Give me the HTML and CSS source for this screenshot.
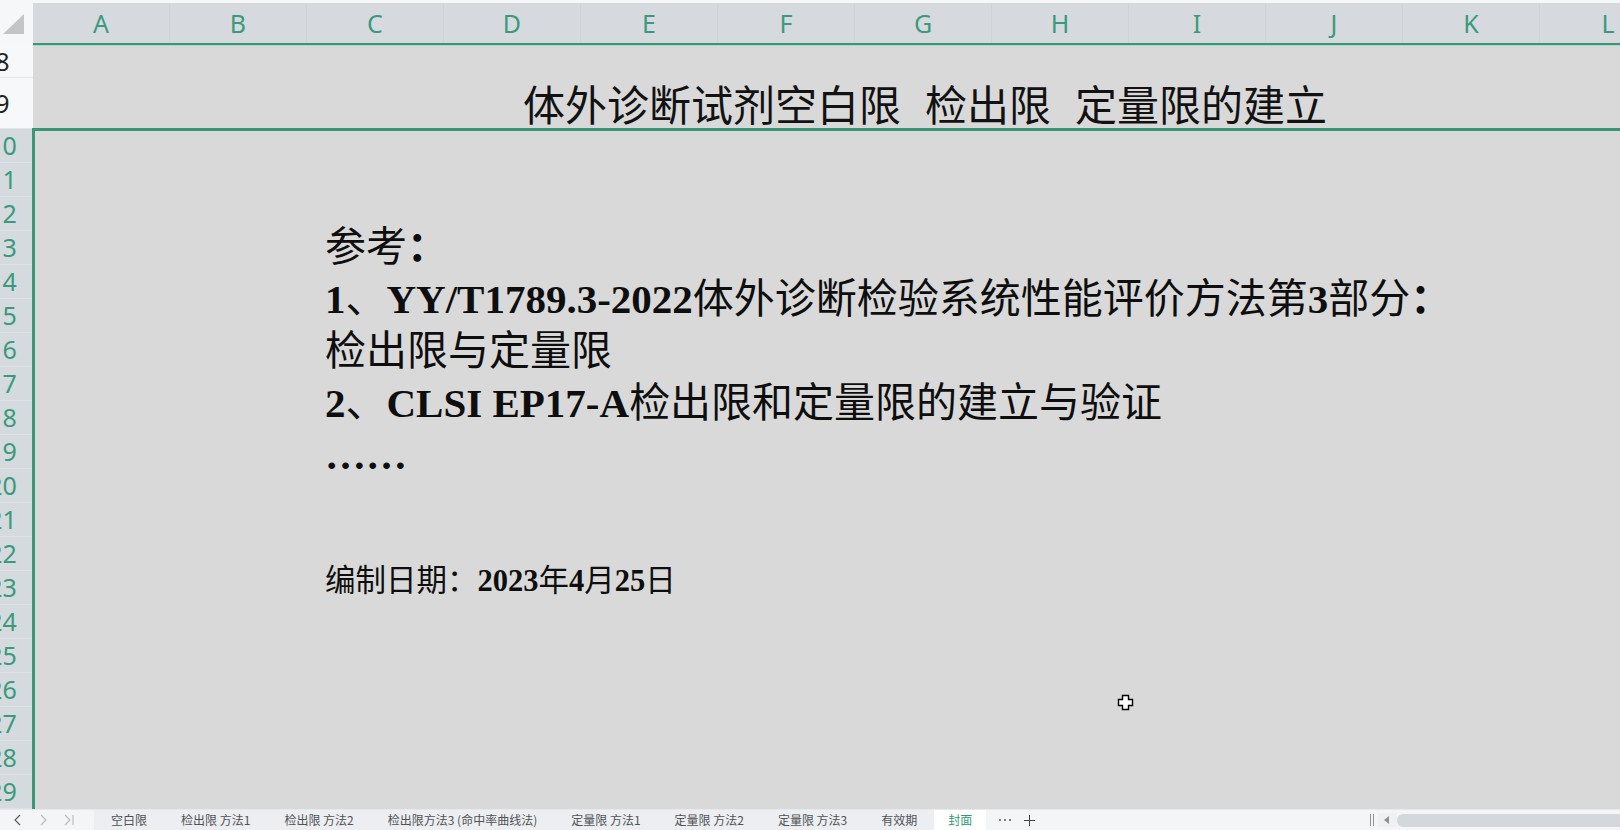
FILE: index.html
```html
<!DOCTYPE html>
<html lang="zh-CN">
<head>
<meta charset="utf-8">
<title>封面</title>
<link rel="stylesheet" href="styles.css">
</head>
<body>
<div class="app">
  <div class="topstrip"></div>
  <div class="colhead">
    <div class="corner">
      <svg width="33" height="42" viewBox="0 0 33 42"><polygon points="3,31 24,31 24,11" fill="#c4c5c7"/></svg>
    </div>
    <div class="cols">
      <div class="col">A</div><div class="col">B</div><div class="col">C</div><div class="col">D</div>
      <div class="col">E</div><div class="col">F</div><div class="col">G</div><div class="col">H</div>
      <div class="col">I</div><div class="col">J</div><div class="col">K</div><div class="col">L</div>
    </div>
  </div>
  <div class="sheet">
    <div class="rowhead">
      <div class="rh r8">8</div>
      <div class="rh r9">9</div>
      <div class="rh sel">10</div><div class="rh sel">11</div><div class="rh sel">12</div><div class="rh sel">13</div>
      <div class="rh sel">14</div><div class="rh sel">15</div><div class="rh sel">16</div><div class="rh sel">17</div>
      <div class="rh sel">18</div><div class="rh sel">19</div><div class="rh sel">20</div><div class="rh sel">21</div>
      <div class="rh sel">22</div><div class="rh sel">23</div><div class="rh sel">24</div><div class="rh sel">25</div>
      <div class="rh sel">26</div><div class="rh sel">27</div><div class="rh sel">28</div><div class="rh sel">29</div>
    </div>
    <div class="cells">
      <div class="titlerow">
        <h1 class="title">体外诊断试剂空白限  检出限  定量限的建立</h1>
      </div>
      <div class="content">
        <p class="line">参考<span class="lat">：</span></p>
        <p class="line"><span class="lat">1</span>、<span class="lat">YY/T1789.3-2022</span>体外诊断检验系统性能评价方法第<span class="lat">3</span>部分<span class="lat">：</span></p>
        <p class="line">检出限与定量限</p>
        <p class="line"><span class="lat">2</span>、<span class="lat">CLSI EP17-A</span>检出限和定量限的建立与验证</p>
        <p class="line"><span class="lat">……</span></p>
        <p class="date">编制日期：<span class="lat">2023</span>年<span class="lat">4</span>月<span class="lat">25</span>日</p>
      </div>
    </div>
  </div>
  <div class="tabbar">
    <div class="nav">
      <svg class="nv n1" width="10" height="14" viewBox="0 0 10 14"><polyline points="7,2 2,7 7,12" fill="none" stroke="#555" stroke-width="1.1"/></svg>
      <svg class="nv n2" width="10" height="14" viewBox="0 0 10 14"><polyline points="3,2 8,7 3,12" fill="none" stroke="#b5b8bc" stroke-width="1.1"/></svg>
      <svg class="nv n3" width="12" height="14" viewBox="0 0 12 14"><polyline points="2,2 7,7 2,12" fill="none" stroke="#b5b8bc" stroke-width="1.1"/><line x1="10" y1="2" x2="10" y2="12" stroke="#b5b8bc" stroke-width="1.1"/></svg>
    </div>
    <div class="tabs">
      <div class="tab">空白限</div>
      <div class="tab">检出限 方法1</div>
      <div class="tab">检出限 方法2</div>
      <div class="tab">检出限方法3 (命中率曲线法)</div>
      <div class="tab">定量限 方法1</div>
      <div class="tab">定量限 方法2</div>
      <div class="tab">定量限 方法3</div>
      <div class="tab">有效期</div>
    </div>
    <div class="tab active">封面</div>
    <div class="more"><svg width="14" height="4" viewBox="0 0 14 4"><circle cx="2" cy="2" r="1" fill="#555"/><circle cx="7" cy="2" r="1" fill="#555"/><circle cx="12" cy="2" r="1" fill="#555"/></svg></div>
    <div class="plus"><svg width="11" height="11" viewBox="0 0 11 11"><line x1="5.5" y1="0" x2="5.5" y2="11" stroke="#444" stroke-width="1"/><line x1="0" y1="5.5" x2="11" y2="5.5" stroke="#444" stroke-width="1"/></svg></div>
    <div class="spacer"></div>
    <div class="split"><span></span><span></span></div>
    <div class="hscroll">
      <div class="sarrow"><svg width="6" height="8" viewBox="0 0 6 8"><polygon points="5,0 5,8 0,4" fill="#8d9196"/></svg></div>
      <div class="thumb"></div>
    </div>
  </div>
  <div class="selection"></div>
  <svg class="cursor" width="17" height="17" viewBox="0 0 17 17"><polygon points="5.5,1.5 11.5,1.5 11.5,5.5 15.5,5.5 15.5,11.5 11.5,11.5 11.5,15.5 5.5,15.5 5.5,11.5 1.5,11.5 1.5,5.5 5.5,5.5" fill="#fff" stroke="#000" stroke-width="1.4"/></svg>
</div>
</body>
</html>
```
FILE: styles.css
```css
html, body {
  margin: 0;
  padding: 0;
}
body {
  width: 1620px;
  height: 830px;
  overflow: hidden;
  background: #ffffff;
  font-family: "Noto Sans", "Noto Sans CJK SC", sans-serif;
}
.app {
  position: relative;
  width: 1620px;
  height: 830px;
  overflow: hidden;
  display: flex;
  flex-direction: column;
}
.topstrip {
  height: 3px;
  flex: none;
  background: #f6f7f9;
}
.colhead {
  display: flex;
  height: 42px;
  flex: none;
}
.corner {
  width: 33px;
  flex: none;
  background: #f6f7f8;
}
.corner svg {
  display: block;
}
.cols {
  flex: 1;
  display: flex;
  height: 40px;
  background: #d6dadf;
  border-bottom: 2px solid #3a9677;
  box-shadow: 0 1px 0 #a9dac6;
  overflow: hidden;
  position: relative;
  z-index: 1;
}
.col {
  flex: none;
  width: 137px;
  box-sizing: border-box;
  border-right: 1px solid #d0d4d8;
  display: flex;
  align-items: center;
  justify-content: center;
  color: #3a9a7b;
  font-size: 25px;
  line-height: 1;
}
.sheet {
  flex: 1;
  display: flex;
  min-height: 0;
}
.rowhead {
  width: 33px;
  flex: none;
  display: flex;
  flex-direction: column;
  overflow: hidden;
}
.rh {
  width: 61px;
  margin-left: -28px;
  height: 34px;
  flex: none;
  box-sizing: border-box;
  display: flex;
  align-items: center;
  justify-content: center;
  font-size: 25px;
  line-height: 1;
  border-bottom: 1px solid #e3e6e9;
}
.rh.r8 {
  height: 33px;
  background: #f7f8f9;
  color: #222;
}
.rh.r9 {
  height: 51px;
  background: #f7f8f9;
  color: #222;
}
.rh.sel {
  background: #d5dadf;
  color: #3a9a7b;
  border-bottom: 1px solid #dde1e5;
}
.cells {
  flex: 1;
  background: #d9d9d9;
  display: flex;
  flex-direction: column;
}
.titlerow {
  height: 84px;
  flex: none;
  box-sizing: border-box;
  padding: 41px 0 0 490px;
}
.title {
  margin: 0;
  font-family: "Liberation Serif", "Noto Sans CJK SC", serif;
  font-weight: 400;
  font-size: 42px;
  line-height: 42px;
  white-space: pre;
  word-spacing: 1.5px;
  color: #121212;
}
.content {
  padding: 92px 0 0 292px;
  font-family: "Liberation Serif", "Noto Sans CJK SC", serif;
  color: #0e0e0e;
}
.line {
  margin: 0;
  font-size: 41px;
  line-height: 52px;
  white-space: nowrap;
}
.lat {
  font-weight: 700;
}
.date {
  margin: 80px 0 0 0;
  font-size: 30.5px;
  line-height: 40px;
  white-space: nowrap;
}
.selection {
  position: absolute;
  left: 32px;
  top: 128px;
  right: 0;
  height: 681px;
  border-top: 3px solid #3a9677;
  border-left: 3px solid #3a9677;
  box-sizing: border-box;
  pointer-events: none;
}
.cursor {
  position: absolute;
  left: 1117px;
  top: 694px;
}
.tabbar {
  height: 21px;
  flex: none;
  display: flex;
  align-items: stretch;
  background: #f3f5f7;
  border-top: 1px solid #e6e9ec;
  box-sizing: border-box;
  font-family: "Noto Sans CJK SC", sans-serif;
  font-size: 12px;
  color: #505356;
}
.nav {
  width: 94px;
  flex: none;
  display: flex;
  align-items: center;
}
.nv {
  display: block;
}
.n1 { margin-left: 13px; }
.n2 { margin-left: 15px; }
.n3 { margin-left: 15px; }
.tabs {
  display: flex;
  background: #eceef1;
}
.tab {
  display: flex;
  align-items: center;
  white-space: pre;
  padding: 0 17px;
  line-height: 1;
}
.tab.active {
  width: 52px;
  box-sizing: border-box;
  padding: 0;
  justify-content: center;
  background: #ffffff;
  color: #2f9a74;
}
.more {
  margin-left: 12px;
  width: 14px;
  display: flex;
  align-items: center;
}
.more svg, .plus svg {
  display: block;
}
.plus {
  margin-left: 12px;
  width: 11px;
  display: flex;
  align-items: center;
}
.spacer {
  flex: 1;
}
.split {
  width: 8px;
  display: flex;
  align-items: center;
  gap: 2px;
  padding-left: 1px;
}
.split span {
  width: 1px;
  height: 12px;
  background: #8e9398;
}
.hscroll {
  width: 242px;
  flex: none;
  display: flex;
  align-items: center;
}
.sarrow {
  width: 19px;
  height: 14px;
  display: flex;
  align-items: center;
  padding-left: 6px;
  box-sizing: border-box;
  background: #eef0f2;
}
.sarrow svg {
  display: block;
}
.thumb {
  flex: 1;
  height: 13px;
  background: #d4d8dd;
  border-radius: 6px 0 0 6px;
}
```
